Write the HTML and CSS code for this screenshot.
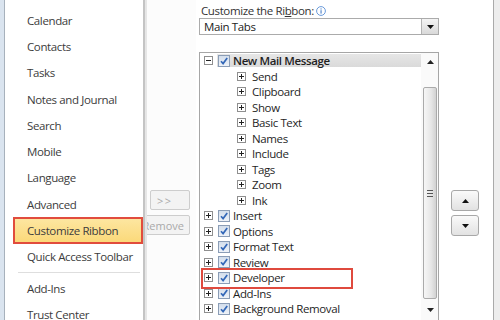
FILE: index.html
```html
<!DOCTYPE html>
<html>
<head>
<meta charset="utf-8">
<link rel="stylesheet" href="styles.css">
</head>
<body>
<div class="window">
  <div class="edge"></div>
  <nav class="sidebar">
    <div class="nav-item">Calendar</div>
    <div class="nav-item">Contacts</div>
    <div class="nav-item">Tasks</div>
    <div class="nav-item">Notes and Journal</div>
    <div class="nav-item">Search</div>
    <div class="nav-item">Mobile</div>
    <div class="nav-item">Language</div>
    <div class="nav-item">Advanced</div>
    <div class="nav-item active">Customize Ribbon</div>
    <div class="nav-item">Quick Access Toolbar</div>
    <div class="nav-sep"></div>
    <div class="nav-item">Add-Ins</div>
    <div class="nav-item">Trust Center</div>
  </nav>
  <div class="middle">
    <div class="btn add">&gt;&gt;</div>
    <div class="btn remove">Remove</div>
  </div>
  <div class="main">
    <div class="label">Customize the Ri<u>b</u>bon:<svg class="info" width="10" height="10" viewBox="0 0 10 10"><circle cx="5" cy="5" r="4.4" fill="#fff" stroke="#5a90d6" stroke-width="0.9"/><rect x="4.5" y="4.2" width="1.1" height="3.4" fill="#4a7fc8"/><rect x="4.5" y="2.4" width="1.1" height="1.1" fill="#4a7fc8"/></svg></div>
    <div class="combo"><span class="combo-text">Main Tabs</span><div class="combo-btn"><svg width="7" height="4" viewBox="0 0 7 4"><path d="M0 0H7L3.5 4Z" fill="#111"/></svg></div></div>
    <div class="tree">
      <div class="rows">
        <div class="row top sel"><span class="exp"></span><span class="bar"><span class="chk"><svg viewBox="0 0 10 10"><path d="M2 5.2 L4.1 7.6 L8.2 2"/></svg></span><span class="txt">New Mail Message</span></span></div>
        <div class="row child"><span class="exp plus"></span><span class="txt">Send</span></div>
        <div class="row child"><span class="exp plus"></span><span class="txt">Clipboard</span></div>
        <div class="row child"><span class="exp plus"></span><span class="txt">Show</span></div>
        <div class="row child"><span class="exp plus"></span><span class="txt">Basic Text</span></div>
        <div class="row child"><span class="exp plus"></span><span class="txt">Names</span></div>
        <div class="row child"><span class="exp plus"></span><span class="txt">Include</span></div>
        <div class="row child"><span class="exp plus"></span><span class="txt">Tags</span></div>
        <div class="row child"><span class="exp plus"></span><span class="txt">Zoom</span></div>
        <div class="row child"><span class="exp plus"></span><span class="txt">Ink</span></div>
        <div class="row top"><span class="exp plus"></span><span class="chk"><svg viewBox="0 0 10 10"><path d="M2 5.2 L4.1 7.6 L8.2 2"/></svg></span><span class="txt">Insert</span></div>
        <div class="row top"><span class="exp plus"></span><span class="chk"><svg viewBox="0 0 10 10"><path d="M2 5.2 L4.1 7.6 L8.2 2"/></svg></span><span class="txt">Options</span></div>
        <div class="row top"><span class="exp plus"></span><span class="chk"><svg viewBox="0 0 10 10"><path d="M2 5.2 L4.1 7.6 L8.2 2"/></svg></span><span class="txt">Format Text</span></div>
        <div class="row top"><span class="exp plus"></span><span class="chk"><svg viewBox="0 0 10 10"><path d="M2 5.2 L4.1 7.6 L8.2 2"/></svg></span><span class="txt">Review</span></div>
        <div class="row top dev"><span class="exp plus"></span><span class="chk"><svg viewBox="0 0 10 10"><path d="M2 5.2 L4.1 7.6 L8.2 2"/></svg></span><span class="txt">Developer</span><span class="mark"></span></div>
        <div class="row top"><span class="exp plus"></span><span class="chk"><svg viewBox="0 0 10 10"><path d="M2 5.2 L4.1 7.6 L8.2 2"/></svg></span><span class="txt">Add-Ins</span></div>
        <div class="row top"><span class="exp plus"></span><span class="chk"><svg viewBox="0 0 10 10"><path d="M2 5.2 L4.1 7.6 L8.2 2"/></svg></span><span class="txt">Background Removal</span></div>
      </div>
      <div class="vscroll">
        <div class="arrow"><svg width="7" height="4" viewBox="0 0 7 4"><path d="M0 4H7L3.5 0Z" fill="#222"/></svg></div>
        <div class="track"><div class="thumb"><span class="grip"></span></div></div>
        <div class="arrow"><svg width="7" height="4" viewBox="0 0 7 4"><path d="M0 0H7L3.5 4Z" fill="#222"/></svg></div>
      </div>
    </div>
  </div>
  <div class="side">
    <div class="mv"><svg width="7" height="4" viewBox="0 0 7 4"><path d="M0 4H7L3.5 0Z" fill="#111"/></svg></div>
    <div class="mv"><svg width="7" height="4" viewBox="0 0 7 4"><path d="M0 0H7L3.5 4Z" fill="#111"/></svg></div>
  </div>
  <div class="rim"></div>
</div>
</body>
</html>
```
FILE: styles.css
```css
* { box-sizing: border-box; }
html, body { margin: 0; padding: 0; }
body {
  width: 500px;
  height: 320px;
  overflow: hidden;
  background: #fff;
  font-family: "Open Sans", "Noto Sans", sans-serif;
  font-size: 11.5px;
  letter-spacing: -0.38px;
  color: #333;
}
.window { display: flex; height: 320px; }

.edge {
  width: 5px;
  flex: none;
  background: #dae4ef;
  border-right: 1px solid #a7b1bc;
}

.sidebar {
  width: 140px;
  flex: none;
  padding-top: 7px;
  background: #fff;
  border-right: 2px solid #c4c4c4;
}
.nav-item {
  height: 26.3px;
  margin-left: 8px;
  padding-left: 12px;
  border: 2px solid transparent;
  display: flex;
  align-items: center;
  white-space: nowrap;
  color: #3c3c3c;
}
.nav-item.active {
  border-color: #e14c3d;
  background: linear-gradient(#fde6a0, #fbd97a);
}
.nav-sep {
  height: 1px;
  margin: 2px 3px 2px 13px;
  background: #dedede;
}

.middle {
  width: 51px;
  flex: none;
  overflow: hidden;
  padding-top: 190px;
  background: #fcfcfc;
  border-left: 2px solid #e6e6e6;
}
.btn {
  height: 20px;
  border: 1px solid #cdcdcd;
  border-radius: 2px;
  background: #f3f3f3;
  color: #a9a9a9;
  font-size: 11px;
  display: flex;
  align-items: center;
  white-space: nowrap;
}
.btn.add {
  margin-left: 3px;
  width: 40px;
  padding-left: 6px;
  letter-spacing: 1.5px;
}
.btn.remove {
  margin-top: 5px;
  margin-left: -22px;
  width: 65px;
  justify-content: flex-end;
  padding-right: 5px;
  letter-spacing: 0;
}

.main {
  width: 243px;
  flex: none;
  padding: 3px 0 0 3px;
}
.label {
  height: 15px;
  display: flex;
  align-items: center;
  padding-left: 2px;
  color: #333;
  white-space: nowrap;
}
.info { margin-left: 2px; flex: none; }
.combo {
  height: 17px;
  border: 1px solid #ababab;
  display: flex;
  align-items: center;
}
.combo-text { flex: 1; padding-left: 4px; color: #222; }
.combo-btn {
  width: 17px;
  height: 15px;
  border-left: 1px solid #b3b3b3;
  background: linear-gradient(#f4f4f4, #d9d9d9);
  display: flex;
  align-items: center;
  justify-content: center;
}

.tree {
  margin-top: 17px;
  height: 280px;
  border: 1px solid #a6a6a6;
  display: flex;
}
.rows { flex: 1; min-width: 0; }
.row {
  height: 15.5px;
  display: flex;
  align-items: center;
  white-space: nowrap;
  color: #1f1f1f;
}
.row.top { padding-left: 4px; }
.row.child { padding-left: 37px; }
.exp {
  width: 9px;
  height: 9px;
  flex: none;
  border: 1px solid #8f8f8f;
  background: #fff;
  position: relative;
}
.exp::before {
  content: "";
  position: absolute;
  left: 1px;
  top: 3px;
  width: 5px;
  height: 1px;
  background: #222;
}
.exp.plus::after {
  content: "";
  position: absolute;
  left: 3px;
  top: 1px;
  width: 1px;
  height: 5px;
  background: #222;
}
.chk {
  width: 12px;
  height: 12px;
  flex: none;
  margin-left: 5px;
  border: 1px solid #8b9db6;
  background: linear-gradient(#d3deec, #eef2f8);
  display: flex;
}
.chk svg { width: 10px; height: 10px; }
.chk path { fill: none; stroke: #3468b8; stroke-width: 1.7; }
.txt { margin-left: 3px; }
.row.child .txt { margin-left: 6px; }
.sel .bar {
  flex: 1;
  height: 13px;
  margin-left: 4px;
  display: flex;
  align-items: center;
  background: linear-gradient(#e6e6e6, #dadada);
  font-weight: 600;
}
.sel .bar .chk { margin-left: 1px; }
.dev { position: relative; }
.mark {
  position: absolute;
  left: 1px;
  top: -2px;
  width: 152px;
  height: 21px;
  border: 2px solid #df4a3e;
}

.vscroll {
  width: 17px;
  flex: none;
  display: flex;
  flex-direction: column;
  background: #fafafa;
}
.arrow {
  height: 17px;
  display: flex;
  align-items: center;
  justify-content: center;
  padding-left: 1px;
}
.track { height: 231px; }
.thumb {
  margin: 17px 0 0 2px;
  width: 14px;
  height: 212px;
  border: 1px solid #aaaaaa;
  border-radius: 2px;
  background: linear-gradient(to right, #f6f6f6, #e6e6e6 60%, #d2d2d2);
  display: flex;
  align-items: center;
  justify-content: center;
}
.grip {
  width: 6px;
  height: 7px;
  border-top: 1px solid #555;
  border-bottom: 1px solid #555;
  background: linear-gradient(transparent 2px, #555 2px, #555 3px, transparent 3px);
}

.side {
  width: 54px;
  flex: none;
  padding: 190px 0 0 12px;
}
.mv {
  width: 28px;
  height: 21px;
  border: 1px solid #a8a8a8;
  border-radius: 3px;
  background: linear-gradient(#fafafa, #e2e2e2);
  display: flex;
  align-items: center;
  justify-content: center;
}
.mv + .mv { margin-top: 4px; }

.rim {
  width: 7px;
  flex: none;
  border-left: 1px solid #aaaaaa;
  background: #ededed;
}
```
